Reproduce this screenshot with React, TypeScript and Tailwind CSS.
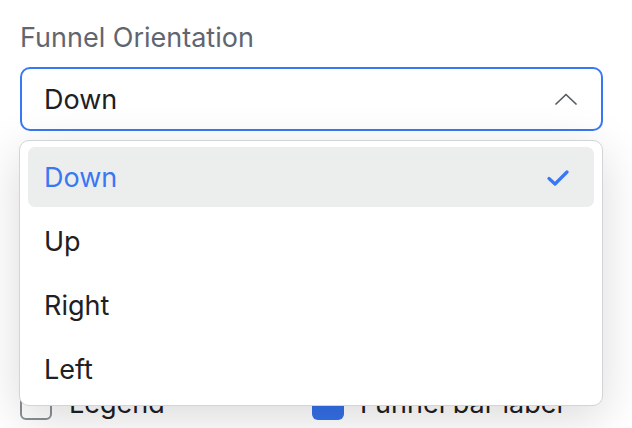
import { useState } from "react";

const options = ["Down", "Up", "Right", "Left"];

export default function App() {
    const [value] = useState("Down");

    return (
        <div className="min-h-screen bg-white font-['Inter',sans-serif] text-[#1d2024]">
            <div className="relative w-[603px] pl-5 pt-[20px]">
                <label className="block text-[27px] leading-[36px] text-[#5f6670]">Funnel Orientation</label>

                {/* Select trigger */}
                <div className="mt-[11px] flex h-[64px] items-center justify-between rounded-[10px] border-2 border-[#3779f4] bg-white pl-[22px] pr-[24px]">
                    <span className="pt-[2px] text-[27px]">{value}</span>
                    <svg width="22" height="12" viewBox="0 0 22 12" fill="none">
                        <path d="M1 11L11 1.5L21 11" stroke="#575c62" strokeWidth="1.7" strokeLinecap="round" strokeLinejoin="round" />
                    </svg>
                </div>

                {/* Content underneath the popup */}
                <div className="mt-[253px] flex items-center">
                    <div className="flex w-[292px] items-center gap-[17px]">
                        <div className="h-[32px] w-[32px] rounded-[6px] border-2 border-[#8a8f96] bg-white" />
                        <span className="text-[27px]">Legend</span>
                    </div>
                    <div className="flex items-center gap-[16px]">
                        <div className="h-[32px] w-[32px] rounded-[6px] bg-[#3470e8]" />
                        <span className="text-[27px]">Funnel bar label</span>
                    </div>
                </div>

                {/* Dropdown popup */}
                <div className="absolute left-[19px] top-[140px] w-[584px] rounded-[10px] border border-[#d2d4d8] bg-white px-[8px] pb-[6px] pt-[6px] shadow-[0_12px_48px_rgba(0,0,0,0.15)]">
                    <div className="flex flex-col gap-[4px]">
                        {options.map((o) => (
                            <div
                                key={o}
                                className={`flex h-[60px] items-center justify-between rounded-[7px] pl-[16px] pr-[25px] pt-[2px] text-[27px] ${
                                    o === value ? "bg-[#eceeed] text-[#3a77f3]" : "text-[#1d2024]"
                                }`}
                            >
                                <span>{o}</span>
                                {o === value && (
                                    <svg width="22" height="16" viewBox="0 0 22 16" fill="none">
                                        <path d="M2 8.5L8 14L20 2" stroke="#3a77f3" strokeWidth="3.2" strokeLinecap="round" strokeLinejoin="round" />
                                    </svg>
                                )}
                            </div>
                        ))}
                    </div>
                </div>
            </div>
        </div>
    );
}
